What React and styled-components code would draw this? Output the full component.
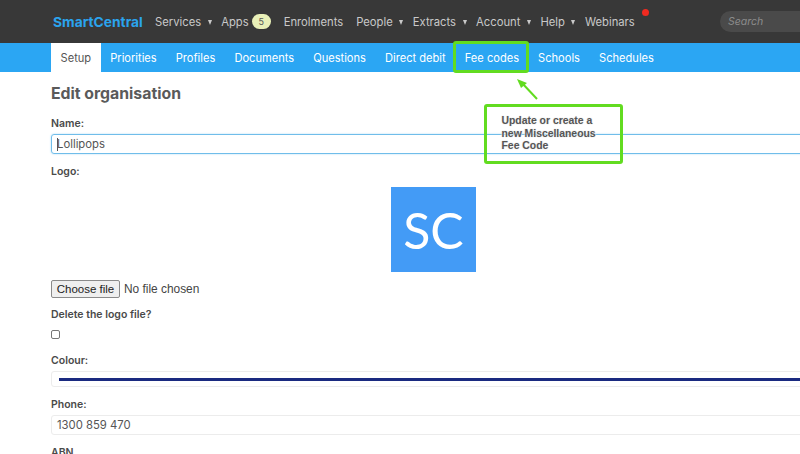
import React from "react";
import styled, { createGlobalStyle } from "styled-components";

const Global = createGlobalStyle`
  html, body { margin: 0; padding: 0; background: #fff; overflow: hidden; }
  body { font-family: Inter, "Liberation Sans", sans-serif; color: #555; }
  #root { width: 800px; height: 454px; overflow: hidden; position: relative; }
`;
const TopBar = styled.header`
  height: 43px; background: #383838; display: flex; align-items: center; padding-left: 53px; position: relative;
`;
const Brand = styled.span`
  color: #2ba4ee; font-weight: 700; font-size: 13.8px; margin-right: 12px; width: 90px; white-space: nowrap;
`;
const NavItem = styled.span`
  color: #c9c9c9; font-size: 11.25px; white-space: nowrap; margin-right: ${p => p.$gap}px; display: inline-flex; align-items: center;
`;
const Caret = styled.span`
  width: 0; height: 0; border-left: 2.5px solid transparent; border-right: 2.5px solid transparent; border-top: 5px solid #c9c9c9; margin-left: 6.5px; margin-top: 2px;
`;
const Badge = styled.span`
  width: 19px; height: 15px; border-radius: 8px; background: #e9f0b8; color: #555; font-size: 9px; display: flex; align-items: center; justify-content: center; margin-left: 3px;
`;
const RedDot = styled.span`
  position: absolute; left: 642px; top: 9px; width: 7px; height: 7px; border-radius: 50%; background: #f02a20;
`;
const Search = styled.div`
  position: absolute; left: 720px; top: 11px; width: 100px; height: 21px; border-radius: 11px; background: #4a4a4a; color: #8c8c8c; font-style: italic; font-size: 10.5px; line-height: 21px; padding-left: 8px;
`;
const TabBar = styled.nav`
  height: 29px; background: #2ba6f3; display: flex; padding-left: 51px;
`;
const Tab = styled.span`
  height: 29px; padding: 0 9.55px; display: flex; align-items: center; font-size: 11.1px; white-space: nowrap;
  color: ${p => p.$active ? "#555" : "#fff"}; background: ${p => p.$active ? "#fff" : "transparent"};
`;
const Main = styled.main`
  padding: 12px 0 0 51px; width: 840px; box-sizing: content-box;
`;
const Title = styled.h1`
  margin: 0 0 13px; font-size: 15.8px; line-height: 20px; font-weight: 700; color: #5a5a5a;
`;
const Label = styled.label`
  display: block; font-size: 10.5px; font-weight: 600; line-height: 14px; color: #4a4a4a;
  margin-bottom: ${p => p.$mb ?? 3}px;
`;
const Input = styled.div`
  box-sizing: border-box; height: ${p => p.$h ?? 20}px; width: 100%; border-radius: 3px; font-size: 11.3px; color: #555;
  display: flex; align-items: center; padding-left: 5px;
  border: 1px solid ${p => p.$focus ? "#70bdea" : "#ececec"};
  box-shadow: ${p => p.$focus ? "0 0 2px #a8d8f4" : "none"};
  margin-bottom: 11px;
`;
const CursorMark = styled.span`
  width: 1px; height: 13px; background: #555; margin-right: -1px;
`;
const LogoRow = styled.div`
  display: flex; justify-content: center; width: 765px; margin: 8px 0 8px;
`;
const Logo = styled.div`
  width: 85px; height: 85px; background: #439bf6; color: #fff; display: flex; align-items: center; justify-content: center;
  font-family: Lato, Inter, sans-serif; font-size: 50px; font-weight: 400;
`;
const FileRow = styled.div`
  display: flex; align-items: center; margin-bottom: 10px; font-family: "Liberation Sans", sans-serif; font-size: 11.9px; color: #444;
`;
const FileButton = styled.button`
  box-sizing: border-box; width: 69px; height: 18px; padding: 0; margin-right: 4px; background: #efefef; border: 1px solid #8a8a8a; border-radius: 2px;
  font: 11.5px "Liberation Sans", sans-serif; color: #222;
`;
const Check = styled.div`
  box-sizing: border-box; width: 9px; height: 9px; border: 1px solid #777; border-radius: 2px; margin: 8px 0 15px;
`;
const ColourLine = styled.div`
  width: 100%; height: 3px; background: #1a2a80; margin-left: 2px;
`;
const Outline = styled.div`
  position: absolute; box-sizing: border-box; border: 3px solid #62dc20; border-radius: 3px;
  left: ${p => p.$x}px; top: ${p => p.$y}px; width: ${p => p.$w}px; height: ${p => p.$h}px;
`;
const Note = styled.div`
  position: absolute; left: 501.5px; top: 115px; width: 110px; font: 700 10.4px/12.5px "Liberation Sans", sans-serif; color: #555;
  text-shadow: 0 0 2px #fff, 0 0 2px #fff, 0 0 1px #888;
`;
const Arrow = styled.svg`
  position: absolute; left: 510px; top: 72px;
`;

const NAV = [["Services", 1], ["Apps", 2], ["Enrolments", 0], ["People", 1], ["Extracts", 1], ["Account", 1], ["Help", 1], ["Webinars", 0]];
const TABS = ["Priorities", "Profiles", "Documents", "Questions", "Direct debit", "Fee codes", "Schools", "Schedules"];

export default function App() {
  return (
    <>
      <Global />
      <TopBar>
        <Brand>SmartCentral</Brand>
        {NAV.map(([n, k]) => (
          <NavItem key={n} $gap={k === 1 ? 9.5 : 13}>
            {n}
            {k === 1 && <Caret />}
            {k === 2 && <Badge>5</Badge>}
          </NavItem>
        ))}
        <RedDot />
        <Search>Search</Search>
      </TopBar>
      <TabBar>
        <Tab $active>Setup</Tab>
        {TABS.map(t => <Tab key={t}>{t}</Tab>)}
      </TabBar>
      <Main>
        <Title>Edit organisation</Title>
        <Label>Name:</Label>
        <Input $focus><CursorMark />Lollipops</Input>
        <Label>Logo:</Label>
        <LogoRow><Logo>SC</Logo></LogoRow>
        <FileRow><FileButton>Choose file</FileButton>No file chosen</FileRow>
        <Label $mb={0}>Delete the logo file?</Label>
        <Check />
        <Label>Colour:</Label>
        <Input $h={16}><ColourLine /></Input>
        <Label>Phone:</Label>
        <Input>1300 859 470</Input>
        <Label>ABN</Label>
      </Main>
      <Outline $x={453} $y={41} $w={76} $h={32} />
      <Outline $x={484} $y={104} $w={139} $h={60} />
      <Arrow width="32" height="30" viewBox="0 0 32 30">
        <path d="M27 27 L12 11" stroke="#62dc20" strokeWidth="2" fill="none" />
        <path d="M7 7 L17 11 L11 16 Z" fill="#62dc20" />
      </Arrow>
      <Note>Update or create a<br />new Miscellaneous<br />Fee Code</Note>
    </>
  );
}
